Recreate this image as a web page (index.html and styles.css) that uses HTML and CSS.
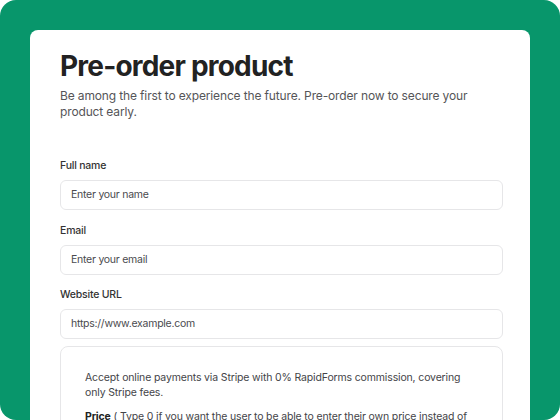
FILE: index.html
```html
<!DOCTYPE html>
<html lang="en">
<head>
<meta charset="utf-8">
<title>Pre-order product</title>
<link rel="stylesheet" href="styles.css">
</head>
<body>
<div class="frame">
  <div class="card">
    <h1 class="title">Pre-order product</h1>
    <p class="subtitle">Be among the first to experience the future. Pre-order now to secure your product early.</p>
    <form class="form">
      <div class="field">
        <label class="label">Full name</label>
        <div class="input">Enter your name</div>
      </div>
      <div class="field">
        <label class="label">Email</label>
        <div class="input">Enter your email</div>
      </div>
      <div class="field field-last">
        <label class="label">Website URL</label>
        <div class="input">https://www.example.com</div>
      </div>
      <div class="payment">
        <p class="pay-text">Accept online payments via Stripe with 0% RapidForms commission, covering only Stripe fees.</p>
        <p class="pay-text"><strong>Price</strong> ( Type 0 if you want the user to be able to enter their own price instead of a fixed one )</p>
      </div>
    </form>
  </div>
</div>
</body>
</html>
```

FILE: styles.css
```css
* { box-sizing: border-box; }
html, body { margin: 0; padding: 0; background: #ffffff; }
body { font-family: Inter, "Noto Sans", sans-serif; }
.frame {
  width: 560px;
  height: 420px;
  background: #08966b;
  border-radius: 16px;
  overflow: hidden;
  padding: 30px 30px 0 30px;
}
.card {
  background: #ffffff;
  border-radius: 8px;
  padding: 19px 27px 40px 30px;
  min-height: 500px;
}
.title {
  margin: 0;
  font-size: 28px;
  line-height: 34px;
  font-weight: 700;
  color: #222222;
  letter-spacing: -0.8px;
}
.subtitle {
  margin: 5px 0 0 0;
  font-size: 12px;
  line-height: 16px;
  color: #555558;
  letter-spacing: -0.14px;
}
.form { margin-top: 39px; display: flex; flex-direction: column; }
.field { display: flex; flex-direction: column; gap: 7px; margin-bottom: 13.5px; }
.field-last { margin-bottom: 6.5px; }
.label {
  font-size: 10.5px;
  line-height: 14px;
  font-weight: 500;
  color: #333333;
  letter-spacing: -0.2px;
}
.input {
  height: 30px;
  border: 1px solid #e6e6e8;
  border-radius: 6px;
  padding: 0 10px;
  font-size: 10.5px;
  line-height: 28px;
  color: #4a4a4e;
  letter-spacing: -0.25px;
}
.payment {
  border: 1px solid #e6e6e8;
  border-radius: 8px;
  padding: 23px 30px 24px 24px;
}
.pay-text {
  margin: 0 0 9px 0;
  font-size: 10.5px;
  line-height: 15px;
  color: #444448;
  letter-spacing: -0.15px;
}
.pay-text strong { font-weight: 700; color: #222222; }
```
